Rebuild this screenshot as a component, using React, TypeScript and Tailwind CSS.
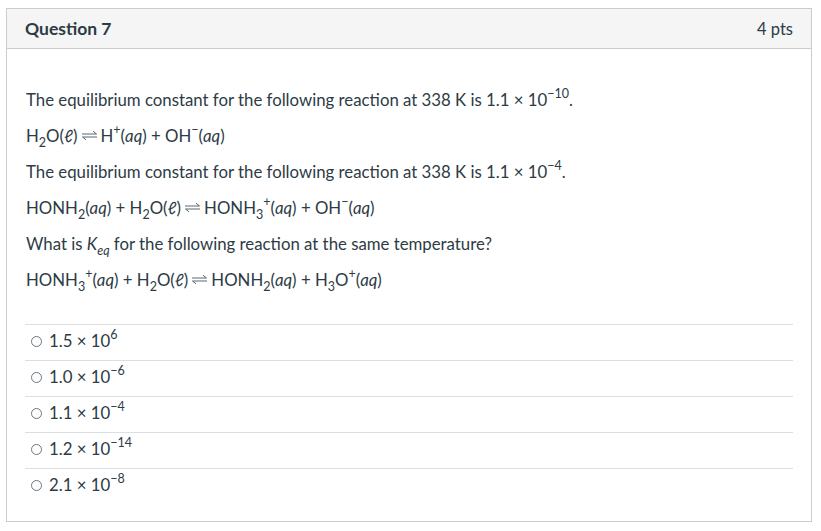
import React from "react";

const FONT = "font-['Lato','Noto_Sans',sans-serif]";

function Eq() {
    return (
        <svg width="17" height="11" viewBox="0 0 17 11" className="inline-block mx-[3px] align-[1px]">
            <path d="M1 4 H15.5 L12 1.2" fill="none" stroke="#4a5660" strokeWidth="0.9" />
            <path d="M16 7 H1.5 L5 9.8" fill="none" stroke="#4a5660" strokeWidth="0.9" />
        </svg>
    );
}

const Sub = ({ children }: { children: React.ReactNode }) => (
    <span className="text-[12.5px] leading-none relative top-[5px]">{children}</span>
);
const Sup = ({ children }: { children: React.ReactNode }) => (
    <span className="text-[12.5px] leading-none relative top-[-8px]">{children}</span>
);
const I = ({ children }: { children: React.ReactNode }) => <i>{children}</i>;

const answers: { base: string; exp: string }[] = [
    { base: "1.5", exp: "6" },
    { base: "1.0", exp: "−6" },
    { base: "1.1", exp: "−4" },
    { base: "1.2", exp: "−14" },
    { base: "2.1", exp: "−8" },
];

export default function App() {
    return (
        <div className={`min-h-[531px] bg-white pt-[8px] pl-[6px] ${FONT} text-[#2d3b45]`}>
            <div className="w-[806px] h-[514px] border border-[#c7cdd1] flex flex-col">
                <div className="h-[40px] bg-[#f5f5f5] border-b border-[#c7cdd1] flex items-center justify-between px-[18px]">
                    <div className="text-[17.5px] font-bold pt-[1px]">Question 7</div>
                    <div className="text-[16.5px] pt-[1px]">4 pts</div>
                </div>

                <div className="px-[18px] pt-[39px] text-[16.8px]">
                    <div className="flex flex-col gap-[12px] leading-[24px] pl-[1px]">
                        <p>
                            The equilibrium constant for the following reaction at 338 K is 1.1 × 10<Sup>−10</Sup>.
                        </p>
                        <p>
                            H<Sub>2</Sub>O(ℓ)<Eq />H<Sup>+</Sup>(<I>aq</I>) + OH<Sup>−</Sup>(<I>aq</I>)
                        </p>
                        <p>
                            The equilibrium constant for the following reaction at 338 K is 1.1 × 10<Sup>−4</Sup>.
                        </p>
                        <p>
                            HONH<Sub>2</Sub>(<I>aq</I>) + H<Sub>2</Sub>O(ℓ)<Eq />HONH<Sub>3</Sub><Sup>+</Sup>(<I>aq</I>) + OH<Sup>−</Sup>(<I>aq</I>)
                        </p>
                        <p>
                            What is <I>K</I><Sub><I>eq</I></Sub> for the following reaction at the same temperature?
                        </p>
                        <p>
                            HONH<Sub>3</Sub><Sup>+</Sup>(<I>aq</I>) + H<Sub>2</Sub>O(ℓ)<Eq />HONH<Sub>2</Sub>(<I>aq</I>) + H<Sub>3</Sub>O<Sup>+</Sup>(<I>aq</I>)
                        </p>
                    </div>

                    <div className="mt-[32px]">
                        {answers.map((a) => (
                            <div key={a.base + a.exp} className="h-[36px] border-t border-[#dcdfe2] flex items-center pl-[6px] pb-[3px]">
                                <span className="w-[11px] h-[11px] rounded-full border border-[#6b7780] mr-[7px]" />
                                <span>
                                    {a.base} × 10<Sup>{a.exp}</Sup>
                                </span>
                            </div>
                        ))}
                    </div>
                </div>
            </div>
        </div>
    );
}
